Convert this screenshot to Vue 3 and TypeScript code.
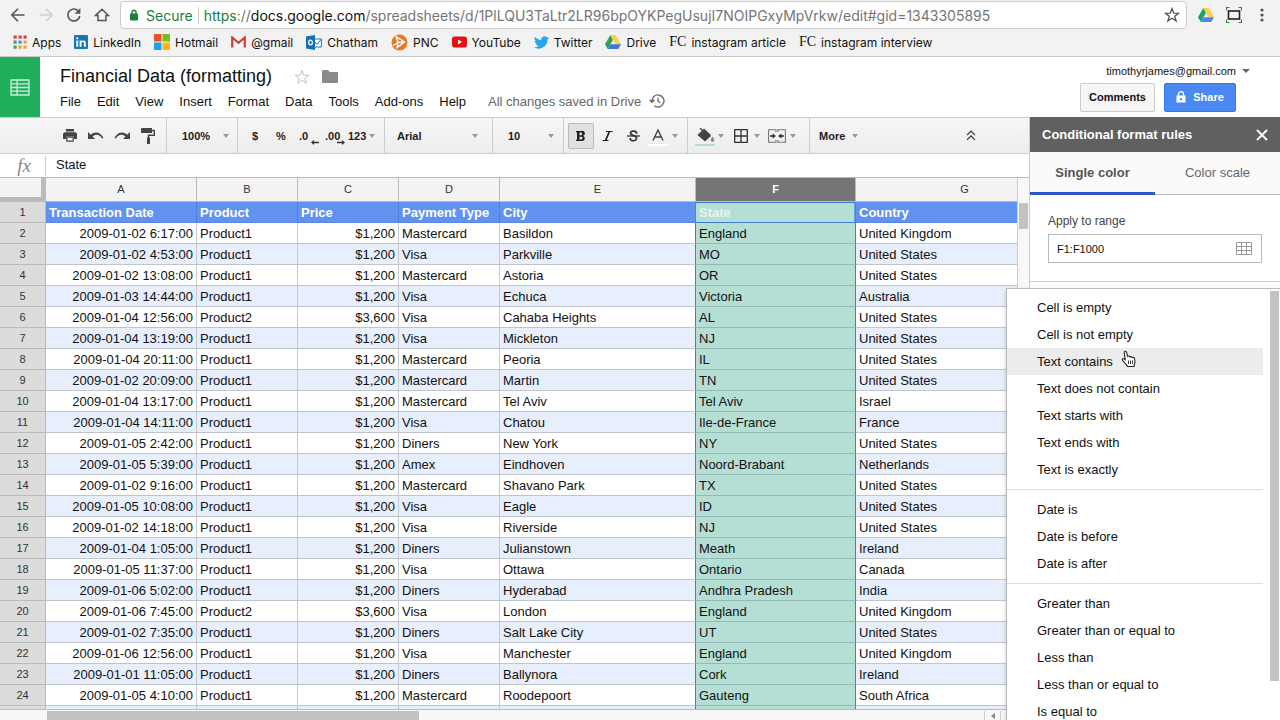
<script setup lang="ts">
import { ref } from 'vue'

interface Bookmark {
  label: string
  icon: string
}

type Row = [string, string, string, string, string, string, string]

const bookmarks: Bookmark[] = [
  { label: 'Apps', icon: 'apps' },
  { label: 'LinkedIn', icon: 'linkedin' },
  { label: 'Hotmail', icon: 'windows' },
  { label: '@gmail', icon: 'gmail' },
  { label: 'Chatham', icon: 'outlook' },
  { label: 'PNC', icon: 'pnc' },
  { label: 'YouTube', icon: 'youtube' },
  { label: 'Twitter', icon: 'twitter' },
  { label: 'Drive', icon: 'drive' },
  { label: 'instagram article', icon: 'fc' },
  { label: 'instagram interview', icon: 'fc' },
]

const appsColors = ['#d8404e', '#d8404e', '#d8404e', '#3aa36a', '#4a8fd8', '#e8a33a', '#3aa36a', '#e8a33a', '#e8a33a']

const menus = ['File', 'Edit', 'View', 'Insert', 'Format', 'Data', 'Tools', 'Add-ons', 'Help']

const columns = ['A', 'B', 'C', 'D', 'E', 'F', 'G']

const headings: Row = ['Transaction Date', 'Product', 'Price', 'Payment Type', 'City', 'State', 'Country']

const rows: Row[] = [
  ['2009-01-02 6:17:00', 'Product1', '$1,200', 'Mastercard', 'Basildon', 'England', 'United Kingdom'],
  ['2009-01-02 4:53:00', 'Product1', '$1,200', 'Visa', 'Parkville', 'MO', 'United States'],
  ['2009-01-02 13:08:00', 'Product1', '$1,200', 'Mastercard', 'Astoria', 'OR', 'United States'],
  ['2009-01-03 14:44:00', 'Product1', '$1,200', 'Visa', 'Echuca', 'Victoria', 'Australia'],
  ['2009-01-04 12:56:00', 'Product2', '$3,600', 'Visa', 'Cahaba Heights', 'AL', 'United States'],
  ['2009-01-04 13:19:00', 'Product1', '$1,200', 'Visa', 'Mickleton', 'NJ', 'United States'],
  ['2009-01-04 20:11:00', 'Product1', '$1,200', 'Mastercard', 'Peoria', 'IL', 'United States'],
  ['2009-01-02 20:09:00', 'Product1', '$1,200', 'Mastercard', 'Martin', 'TN', 'United States'],
  ['2009-01-04 13:17:00', 'Product1', '$1,200', 'Mastercard', 'Tel Aviv', 'Tel Aviv', 'Israel'],
  ['2009-01-04 14:11:00', 'Product1', '$1,200', 'Visa', 'Chatou', 'Ile-de-France', 'France'],
  ['2009-01-05 2:42:00', 'Product1', '$1,200', 'Diners', 'New York', 'NY', 'United States'],
  ['2009-01-05 5:39:00', 'Product1', '$1,200', 'Amex', 'Eindhoven', 'Noord-Brabant', 'Netherlands'],
  ['2009-01-02 9:16:00', 'Product1', '$1,200', 'Mastercard', 'Shavano Park', 'TX', 'United States'],
  ['2009-01-05 10:08:00', 'Product1', '$1,200', 'Visa', 'Eagle', 'ID', 'United States'],
  ['2009-01-02 14:18:00', 'Product1', '$1,200', 'Visa', 'Riverside', 'NJ', 'United States'],
  ['2009-01-04 1:05:00', 'Product1', '$1,200', 'Diners', 'Julianstown', 'Meath', 'Ireland'],
  ['2009-01-05 11:37:00', 'Product1', '$1,200', 'Visa', 'Ottawa', 'Ontario', 'Canada'],
  ['2009-01-06 5:02:00', 'Product1', '$1,200', 'Diners', 'Hyderabad', 'Andhra Pradesh', 'India'],
  ['2009-01-06 7:45:00', 'Product2', '$3,600', 'Visa', 'London', 'England', 'United Kingdom'],
  ['2009-01-02 7:35:00', 'Product1', '$1,200', 'Diners', 'Salt Lake City', 'UT', 'United States'],
  ['2009-01-06 12:56:00', 'Product1', '$1,200', 'Visa', 'Manchester', 'England', 'United Kingdom'],
  ['2009-01-01 11:05:00', 'Product1', '$1,200', 'Diners', 'Ballynora', 'Cork', 'Ireland'],
  ['2009-01-05 4:10:00', 'Product1', '$1,200', 'Mastercard', 'Roodepoort', 'Gauteng', 'South Africa'],
  ['', '', '', '', '', '', ''],
]

const conditionGroups: string[][] = [
  ['Cell is empty', 'Cell is not empty', 'Text contains', 'Text does not contain', 'Text starts with', 'Text ends with', 'Text is exactly'],
  ['Date is', 'Date is before', 'Date is after'],
  ['Greater than', 'Greater than or equal to', 'Less than', 'Less than or equal to', 'Is equal to'],
]

const highlighted = ref('Text contains')
const formula = ref('State')
const range = ref('F1:F1000')
const tab = ref<'single' | 'scale'>('single')
</script>

<template>
  <div class="window">
    <header class="browser">
      <div class="nav-row">
        <nav class="nav-buttons" aria-label="Browser">
          <button aria-label="Back">
            <svg width="16" height="16" viewBox="0 0 16 16" fill="none" stroke="#555" stroke-width="1.6"><path d="M14.5 8H2M8 1.8 1.8 8 8 14.2" /></svg>
          </button>
          <button aria-label="Forward">
            <svg width="16" height="16" viewBox="0 0 16 16" fill="none" stroke="#cfcfcf" stroke-width="1.6"><path d="M1.5 8H14M8 1.8 14.2 8 8 14.2" /></svg>
          </button>
          <button aria-label="Reload">
            <svg width="16" height="16" viewBox="0 0 16 16" fill="none" stroke="#555" stroke-width="1.6"><path d="M13.8 9A6 6 0 1 1 12.2 3.8" /><path d="M14.4 1V6.8H8.6Z" fill="#555" stroke="none" /></svg>
          </button>
          <button aria-label="Home">
            <svg width="16" height="16" viewBox="0 0 16 16" fill="none" stroke="#555" stroke-width="1.5"><path d="M1.6 8.4 8 2.2 14.4 8.4H12V13.6H4V8.4Z" /></svg>
          </button>
        </nav>
        <div class="address">
          <svg width="8" height="12" viewBox="0 0 8 12"><path d="M2 5V3.3a2 2 0 0 1 4 0V5" fill="none" stroke="#188038" stroke-width="1.4" /><rect x="0" y="4.6" width="8" height="6.8" rx="0.8" fill="#188038" /></svg>
          <span class="secure">Secure</span>
          <span class="url"><b>https</b>://<i>docs.google.com</i>/spreadsheets/d/1PlLQU3TaLtr2LR96bpOYKPegUsujI7NOIPGxyMpVrkw/edit#gid=1343305895</span>
          <button class="star" aria-label="Bookmark this page">
            <svg width="16" height="16" viewBox="0 0 16 16" fill="none" stroke="#555" stroke-width="1.3"><path d="M8 1.6 9.7 6.1 14.5 6.3 10.7 9.3 12.1 13.9 8 11.2 3.9 13.9 5.3 9.3 1.5 6.3 6.3 6.1Z" /></svg>
          </button>
        </div>
        <div class="extensions">
          <button aria-label="Google Drive">
            <svg width="16" height="14" viewBox="0 0 16 14"><path d="M5.3 0 0 9.3 2.7 14 8 4.7Z" fill="#11a861" /><path d="M5.3 0h5.4L16 9.3h-5.3Z" fill="#ffcf48" /><path d="M5.4 9.3H16L13.3 14H2.7Z" fill="#4a87ee" /></svg>
          </button>
          <button aria-label="Capture">
            <svg width="16" height="16" viewBox="0 0 16 16" fill="none"><path d="M.5 3.5v-3h3M12.5.5h3v3M15.5 12.5v3h-3M3.5 15.5h-3v-3" stroke="#2d8a2d" stroke-width="1.2" /><rect x="2.5" y="4" width="11" height="8" stroke="#222" stroke-width="1.6" /></svg>
          </button>
          <button aria-label="Menu">
            <svg width="4" height="14" viewBox="0 0 4 14" fill="#555"><circle cx="2" cy="2" r="1.6" /><circle cx="2" cy="7" r="1.6" /><circle cx="2" cy="12" r="1.6" /></svg>
          </button>
        </div>
      </div>

      <nav class="bookmarks" aria-label="Bookmarks">
        <a v-for="mark in bookmarks" :key="mark.label" href="#">
          <svg v-if="mark.icon === 'apps'" width="14" height="14" viewBox="0 0 14 14">
            <rect v-for="(color, n) in appsColors" :key="n" :x="(n % 3) * 5 + 0.5" :y="Math.floor(n / 3) * 5 + 0.5" width="3.2" height="3.2" :fill="color" />
          </svg>
          <svg v-else-if="mark.icon === 'linkedin'" width="14" height="14" viewBox="0 0 14 14">
            <rect width="14" height="14" rx="1" fill="#1279b5" /><path d="M2.3 5.5h1.9v6.2H2.3ZM5.6 5.5h1.8v.9c.9-1.5 4.4-1.5 4.4 1.6v3.7H9.9V8.5c0-2-2.4-1.8-2.4 0v3.2H5.6Z" fill="#fff" /><circle cx="3.25" cy="3.3" r="1.15" fill="#fff" />
          </svg>
          <svg v-else-if="mark.icon === 'windows'" width="16" height="16" viewBox="0 0 16 16">
            <path d="M0 0h7.5v7.5H0Z" fill="#e8502a" /><path d="M8.5 0H16v7.5H8.5Z" fill="#7dbb1c" /><path d="M0 8.5h7.5V16H0Z" fill="#1aa2ec" /><path d="M8.5 8.5H16V16H8.5Z" fill="#fdb813" />
          </svg>
          <svg v-else-if="mark.icon === 'gmail'" width="15" height="12" viewBox="0 0 15 12">
            <path d="M1 .8h13v10.5H1Z" fill="#f8f6f6" /><path d="M1.2 11.5V1.5L7.5 6.8 13.8 1.5V11.5" fill="none" stroke="#d63c37" stroke-width="2.2" />
          </svg>
          <svg v-else-if="mark.icon === 'outlook'" width="16" height="15" viewBox="0 0 16 15">
            <path d="M8 4h7.4v8H8Z" fill="#fff" stroke="#1a75bc" /><path d="m9 7 2 2.5L15 4.5" fill="none" stroke="#1a75bc" /><path d="M0 1.5 9 0v15L0 13.5Z" fill="#1070ba" /><ellipse cx="4.5" cy="7.5" rx="1.9" ry="2.4" fill="none" stroke="#fff" stroke-width="1.3" />
          </svg>
          <svg v-else-if="mark.icon === 'pnc'" width="17" height="17" viewBox="0 0 17 17">
            <circle cx="8.5" cy="8.5" r="8" fill="#e57b27" /><path d="M5 2.5 13.5 8 6 13.5 7 8.5ZM7 8.5 13.5 8M7 8.5 2 11.5" fill="none" stroke="#fff" stroke-width="1.4" />
          </svg>
          <svg v-else-if="mark.icon === 'youtube'" width="15" height="12" viewBox="0 0 15 12">
            <rect y=".5" width="15" height="11" rx="2.8" fill="#e60f12" /><path d="M6 3.6 10 6 6 8.4Z" fill="#fff" />
          </svg>
          <svg v-else-if="mark.icon === 'twitter'" width="15" height="13" viewBox="0 0 24 20">
            <path d="M24 2.4a10 10 0 0 1-2.8.8A5 5 0 0 0 23.3.5a10 10 0 0 1-3.1 1.2A4.9 4.9 0 0 0 11.8 6.2 14 14 0 0 1 1.7 1 4.9 4.9 0 0 0 3.2 7.6a4.9 4.9 0 0 1-2.2-.6 4.9 4.9 0 0 0 3.9 4.9 5 5 0 0 1-2.2.1 4.9 4.9 0 0 0 4.6 3.4A9.9 9.9 0 0 1 0 17.5 14 14 0 0 0 21.5 5 10 10 0 0 0 24 2.4Z" fill="#2aa5ec" />
          </svg>
          <svg v-else-if="mark.icon === 'drive'" width="16" height="14" viewBox="0 0 16 14">
            <path d="M5.3 0 0 9.3 2.7 14 8 4.7Z" fill="#2ea35a" /><path d="M5.3 0h5.4L16 9.3h-5.3Z" fill="#fbd14b" /><path d="M5.4 9.3H16L13.3 14H2.7Z" fill="#4374de" />
          </svg>
          <span v-else class="fc">FC</span>
          <span>{{ mark.label }}</span>
        </a>
      </nav>
    </header>

    <section class="doc-header">
      <a class="home" href="#" aria-label="Sheets home">
        <svg width="20" height="17" viewBox="0 0 20 17" fill="none" stroke="#c9f0d8" stroke-width="1.3"><path d="M1 1h18v15H1ZM1 4.8h18M1 8.5h18M1 12.2h18M7 1v15" /></svg>
      </a>
      <div class="doc-info">
        <div class="title-row">
          <h1>Financial Data (formatting)</h1>
          <button aria-label="Star">
            <svg width="16" height="16" viewBox="0 0 16 16" fill="none" stroke="#c4c4c4"><path d="M8 1.3 9.7 6.1 15 6.2 10.8 9.3 12.3 14.3 8 11.3 3.7 14.3 5.2 9.3 1 6.2 6.3 6.1Z" /></svg>
          </button>
          <button aria-label="Move to folder">
            <svg width="16" height="14" viewBox="0 0 16 14"><path d="M1 0h5l1.6 2H15a1 1 0 0 1 1 1v9a1 1 0 0 1-1 1H1a1 1 0 0 1-1-1V1A1 1 0 0 1 1 0Z" fill="#8a8a8a" /></svg>
          </button>
        </div>
        <nav class="menu-row" aria-label="Menu bar">
          <button v-for="menu in menus" :key="menu">{{ menu }}</button>
          <span class="saved">All changes saved in Drive</span>
          <svg width="16" height="14" viewBox="0 0 16 14" fill="none" stroke="#666" stroke-width="1.3"><path d="M3 7.5A6 6 0 1 1 5.3 11.7M.8 5.8 3 8.3 5.4 5.8M9 3.8V7.2L11.3 8.8" /></svg>
        </nav>
      </div>
      <div class="account">
        <button class="email">timothyrjames@gmail.com <span class="caret" /></button>
        <div class="actions">
          <button class="comments">Comments</button>
          <button class="share">
            <svg width="10" height="12" viewBox="0 0 10 12"><path d="M2.5 5V3.2a2.5 2.5 0 0 1 5 0V5" fill="none" stroke="#fff" stroke-width="1.3" /><path d="M.5 4.6h9v7h-9ZM5 7a1.2 1.2 0 1 0 .01 0Z" fill="#fff" fill-rule="evenodd" /></svg>
            Share
          </button>
        </div>
      </div>
    </section>

    <div class="workspace">
      <main>
        <div class="toolbar" role="toolbar" aria-label="Formatting">
          <div class="group g-file">
            <button aria-label="Print"><svg width="14" height="13" viewBox="0 0 14 13" fill="#444"><path d="M3 0h8v2.6H3ZM2 3.3h10a2 2 0 0 1 2 2V10h-3V7.5H3V10H0V5.3a2 2 0 0 1 2-2Z" /><path d="M3.8 8.2h6.4v4H3.8Z" fill="#f5f5f5" stroke="#444" stroke-width="1.2" /></svg></button>
            <button aria-label="Undo"><svg width="16" height="9" viewBox="0 0 16 9"><path d="M0 1v7h7L4.5 5.5C8 2.7 11.8 3.5 14 7.5L15.5 7C13 1.5 7.5-.3 2.8 3.7Z" fill="#444" /></svg></button>
            <button aria-label="Redo"><svg width="16" height="9" viewBox="0 0 16 9"><path d="M16 1v7H9l2.5-2.5C8 2.7 4.2 3.5 2 7.5L.5 7C3 1.5 8.5-.3 13.2 3.7Z" fill="#444" /></svg></button>
            <button aria-label="Paint format"><svg width="14" height="16" viewBox="0 0 14 16"><path d="M1 0h10v5H1A1 1 0 0 1 0 4V1A1 1 0 0 1 1 0Z" fill="#444" /><path d="M11 2.5h2.3v4.8H7.5V10" fill="none" stroke="#444" stroke-width="1.4" /><path d="M6 9.5h3V16H6Z" fill="#444" /></svg></button>
          </div>
          <div class="group g-zoom"><button class="drop">100% <span class="caret" /></button></div>
          <div class="group g-number">
            <button aria-label="Currency">$</button>
            <button aria-label="Percent">%</button>
            <button class="decimals" aria-label="Decrease decimals">.0<svg width="8" height="5" viewBox="0 0 8 5"><path d="M0 2.5 3 0v1.7h5v1.6H3V5Z" fill="#333" /></svg></button>
            <button class="decimals" aria-label="Increase decimals">.00<svg width="8" height="5" viewBox="0 0 8 5"><path d="M8 2.5 5 0v1.7H0v1.6h5V5Z" fill="#333" /></svg></button>
            <button class="formats">123 <span class="caret" /></button>
          </div>
          <div class="group g-font"><button class="drop">Arial <span class="caret" /></button></div>
          <div class="group g-size"><button class="drop">10 <span class="caret" /></button></div>
          <div class="group g-text">
            <button class="pressed" aria-label="Bold"><svg width="10" height="12" viewBox="0 0 10 12"><path d="M0 1h5.5a2.5 2.5 0 0 1 1.6 4.8 2.7 2.7 0 0 1-1.2 5.2H0V9.7h1V2.3H0ZM3.5 2.5v2.8h1.3a1.4 1.4 0 0 0 0-2.8ZM3.5 6.7v2.8h1.6a1.4 1.4 0 0 0 0-2.8Z" fill="#222" fill-rule="evenodd" /></svg></button>
            <button aria-label="Italic"><svg width="11" height="12" viewBox="0 0 11 12" fill="none" stroke="#222"><path d="M4 1.5h6.5M.5 10.5h6" stroke-width="1.2" /><path d="M7.5 1.5 3.5 10.5" stroke-width="1.8" /></svg></button>
            <button aria-label="Strikethrough"><svg width="13" height="12" viewBox="0 0 13 12" fill="none" stroke="#333" stroke-width="1.7"><path d="M9.5 3.8V2.3C8 .7 3.8.7 3.5 3c0 1.5 1.5 2 3 2.5s3.5 1.5 3 3.3C8.8 11.3 5 11.3 3.3 9.5V8" /><path d="M0 6h13" stroke-width="1.3" /></svg></button>
            <button class="swatch" aria-label="Text color"><span class="glyph"><svg width="12" height="12" viewBox="0 0 12 12" fill="none" stroke="#444" stroke-width="1.4"><path d="M1 11.5 6 1 11 11.5M3 8h6" /></svg></span><span class="caret" /></button>
          </div>
          <div class="group g-cell">
            <button aria-label="Fill color"><span class="glyph mint"><svg width="20" height="14" viewBox="0 0 20 14"><path d="M3 7.5 9.5 2 16 8 10 13.5Z" fill="#444" /><path d="M5 0 9.5 4.5M3 7.5 9 1.5 15.5 7.5" fill="none" stroke="#444" stroke-width="1.4" /><path d="M17.5 8.5c1.3 2 1.8 2.8 1.8 3.6a1.8 1.8 0 0 1-3.6 0c0-.8.5-1.6 1.8-3.6Z" fill="#888" /></svg></span><span class="caret" /></button>
            <button aria-label="Borders"><span class="glyph"><svg width="14" height="14" viewBox="0 0 14 14" fill="none" stroke="#333" stroke-width="1.3"><path d="M.7.7h12.6v12.6H.7ZM7 .7v12.6M.7 7h12.6" /></svg></span><span class="caret" /></button>
            <button aria-label="Merge cells"><span class="glyph"><svg width="18" height="14" viewBox="0 0 18 14" fill="none" stroke="#777"><path d="M8 3V.7H.6v12.6H8V11M10 3V.7h7.4v12.6H10V11" stroke-width="1.1" /><path d="M2 7h3M16 7h-3" stroke="#333" stroke-width="1.4" /><path d="M4.5 4.5 8 7 4.5 9.5ZM13.5 4.5 10 7l3.5 2.5Z" fill="#333" stroke="none" /></svg></span><span class="caret" /></button>
          </div>
          <button class="more">More <span class="caret" /></button>
          <button class="collapse" aria-label="Hide menus"><svg width="10" height="11" viewBox="0 0 10 11" fill="none" stroke="#333" stroke-width="1.2"><path d="M1 5.2 5 1.2 9 5.2M1 9.8 5 5.8 9 9.8" /></svg></button>
        </div>

        <div class="formula-bar">
          <label for="formula">fx</label>
          <input id="formula" v-model="formula" type="text" />
        </div>

        <div class="sheet">
          <div class="cells">
            <table>
              <colgroup>
                <col class="w-num" /><col class="w-a" /><col class="w-b" /><col class="w-c" /><col class="w-d" /><col class="w-e" /><col class="w-f" /><col class="w-g" />
              </colgroup>
              <thead>
                <tr>
                  <th class="corner" scope="col" aria-label="Select all"></th>
                  <th v-for="column in columns" :key="column" scope="col" :class="{ selected: column === 'F' }">{{ column }}</th>
                </tr>
              </thead>
              <tbody>
                <tr class="headings">
                  <th scope="row">1</th>
                  <td v-for="(heading, n) in headings" :key="n" :class="`c-${columns[n]}`">{{ heading }}</td>
                </tr>
                <tr v-for="(row, r) in rows" :key="r" :class="{ band: r % 2 === 1 }">
                  <th scope="row">{{ row[0] ? r + 2 : '' }}</th>
                  <td v-for="(value, n) in row" :key="n" :class="`c-${columns[n]}`">{{ value }}</td>
                </tr>
              </tbody>
            </table>
          </div>
          <div class="v-scroll"><div class="thumb" /></div>
        </div>
        <div class="h-scroll"><div class="thumb" /><div class="arrow"><svg width="4" height="6" viewBox="0 0 4 6"><path d="M4 0v6L0 3Z" fill="#888" /></svg></div></div>
      </main>

      <aside>
        <div class="panel-title">
          <h2>Conditional format rules</h2>
          <button aria-label="Close"><svg width="12" height="12" viewBox="0 0 12 12" stroke="#fff" stroke-width="1.9"><path d="M1 1 11 11M11 1 1 11" /></svg></button>
        </div>
        <div class="tabs" role="tablist">
          <button role="tab" :aria-selected="tab === 'single'" :class="{ active: tab === 'single' }" @click="tab = 'single'">Single color</button>
          <button role="tab" :aria-selected="tab === 'scale'" :class="{ active: tab === 'scale' }" @click="tab = 'scale'">Color scale</button>
        </div>
        <div class="range">
          <label for="range">Apply to range</label>
          <div class="range-box">
            <input id="range" v-model="range" type="text" />
            <button aria-label="Select data range"><svg width="16" height="13" viewBox="0 0 16 13" fill="none" stroke="#999"><path d="M.5.5h15v12H.5ZM.5 4.5h15M.5 8.5h15M5.5.5v12M10.500.5v12" /></svg></button>
          </div>
        </div>
        <div class="conditions" role="menu">
          <div class="options">
            <ul v-for="(group, g) in conditionGroups" :key="g">
              <li v-for="option in group" :key="option">
                <button role="menuitem" :class="{ hover: option === highlighted }" @mouseenter="highlighted = option">{{ option }}</button>
              </li>
            </ul>
          </div>
          <div class="thumb" />
          <svg class="pointer" width="16" height="18" viewBox="0 0 16 18"><path d="M4.2 9.6 3.2 2.8C3 1 5 .7 5.5 2.3L6.8 6.5C7.5 5.7 8.8 6 9 7c.8-.7 2-.3 2.2.6.9-.6 2.1-.1 2.3.9l.5 3c.1 1.8-.8 2.500-1 5H6.5C5.8 14.5 3 12.5 1.5 10.3.7 9 2.3 8 3.3 9Z" fill="#fff" stroke="#222" stroke-width="1.1" /><path d="M7.5 10.5v3.5M9.5 10.5v3.5M11.5 10.5v3.5" stroke="#222" stroke-width=".9" /></svg>
        </div>
      </aside>
    </div>
  </div>
</template>

<style>
body {
  margin: 0;
}
</style>

<style scoped>
* {
  box-sizing: border-box;
}

button,
input {
  margin: 0;
  padding: 0;
  border: 0;
  background: none;
  font: inherit;
  color: inherit;
}

svg {
  display: block;
  flex: none;
}

h1,
h2,
ul {
  margin: 0;
  padding: 0;
  font-weight: normal;
  list-style: none;
}

.window {
  display: flex;
  flex-direction: column;
  height: 100vh;
  overflow: hidden;
  background: #fff;
  color: #111;
  font: 13px "Liberation Sans", Arial, sans-serif;
  white-space: nowrap;
}

/* Browser chrome */
.browser {
  flex: none;
  background: #f2f2f2;
  border-bottom: 1px solid #c8c8c8;
  font-family: Inter, "Noto Sans", sans-serif;
}

.nav-row {
  display: flex;
  align-items: center;
  height: 30px;
}

.nav-buttons {
  display: flex;
  gap: 12px;
  width: 120px;
  padding-left: 10px;
}

.address {
  display: flex;
  flex: 1;
  align-items: center;
  min-width: 0;
  height: 28px;
  padding: 0 6px 0 9px;
  border: 1px solid #ccc;
  border-radius: 4px;
  background: #fff;
  font-size: 14px;
}

.secure {
  margin: 0 5px 0 8px;
  color: #188038;
}

.url {
  flex: 1;
  padding-left: 5px;
  border-left: 1px solid #ccc;
  color: #757575;
  overflow: hidden;
}

.url b {
  font-weight: normal;
  color: #188038;
}

.url i {
  font-style: normal;
  color: #111;
}

.extensions {
  display: flex;
  align-items: center;
  gap: 12px;
  width: 93px;
  padding-left: 11px;
}

.extensions button:last-child {
  margin-left: 6px;
}

.bookmarks {
  display: flex;
  align-items: center;
  gap: 13px;
  height: 26px;
  padding: 0 0 2px 13px;
  font-size: 12px;
}

.bookmarks a {
  display: flex;
  align-items: center;
  gap: 5px;
  color: #111;
  text-decoration: none;
}

.fc {
  font: 14px/16px "Liberation Serif", serif;
}

/* Document header */
.doc-header {
  display: flex;
  flex: none;
  height: 60px;
}

.home {
  display: flex;
  align-items: center;
  justify-content: center;
  width: 40px;
  background: #1fae5b;
}

.doc-info {
  flex: 1;
  padding: 8px 0 0 20px;
}

.title-row {
  display: flex;
  align-items: center;
  height: 23px;
}

.title-row h1 {
  margin-right: 22px;
  font-size: 18px;
}

.title-row button {
  margin-right: 12px;
}

.menu-row {
  display: flex;
  align-items: center;
  gap: 16px;
  height: 26px;
}

.saved {
  margin-left: 6px;
  color: #666;
}

.menu-row svg {
  margin-left: -8px;
}

.account {
  display: flex;
  flex-direction: column;
  align-items: flex-end;
  gap: 4px;
  padding-top: 6px;
  font-size: 11px;
}

.email {
  display: flex;
  align-items: center;
  gap: 6px;
  height: 16px;
  padding-right: 30px;
}

.actions {
  display: flex;
  gap: 9px;
  padding-right: 44px;
}

.actions button {
  display: flex;
  align-items: center;
  justify-content: center;
  width: 75px;
  height: 29px;
  padding-bottom: 2px;
  border: 1px solid #ccc;
  border-radius: 2px;
  background: #f6f6f6;
  font-weight: bold;
}

.actions .share {
  gap: 7px;
  width: 72px;
  border-color: #3079ed;
  background: #4a88f2;
  color: #fff;
}

.caret {
  display: block;
  flex: none;
  border: 3px solid transparent;
  border-top: 4px solid #999;
  border-bottom: 0;
}

.email .caret {
  border-width: 4px 4px 0;
  border-top-color: #666;
}

/* Workspace */
.workspace {
  display: flex;
  flex: 1;
  min-height: 0;
}

main {
  display: flex;
  flex: 1;
  flex-direction: column;
  min-width: 0;
  border-right: 1px solid #ccc;
}

.toolbar {
  display: flex;
  flex: none;
  align-items: center;
  height: 37px;
  border-top: 1px solid #ccc;
  border-bottom: 1px solid #ccc;
  background: linear-gradient(#f7f7f7, #ececec);
  color: #222;
  font-size: 11px;
  font-weight: bold;
}

.group {
  display: flex;
  align-items: center;
  height: 100%;
  border-right: 1px solid #ccc;
}

.group button {
  display: flex;
  align-items: center;
  justify-content: center;
  height: 26px;
}

.g-file {
  width: 167px;
  padding-left: 57px;
}

.g-file button,
.g-number button,
.g-text button {
  width: 26px;
}

.group .drop {
  flex: 1;
  justify-content: space-between;
}

.g-zoom {
  width: 71px;
  padding: 0 8px 0 15px;
}

.g-number {
  width: 147px;
  padding-left: 4px;
}

.group .decimals {
  position: relative;
  justify-content: flex-start;
  padding-left: 5px;
}

.decimals svg {
  position: absolute;
  right: 1px;
  bottom: 4px;
}

.group .formats {
  justify-content: flex-start;
  gap: 3px;
  width: 32px;
  padding-left: 2px;
}

.g-font {
  width: 108px;
  padding: 0 14px 0 12px;
}

.g-size {
  width: 71px;
  padding: 0 9px 0 15px;
}

.g-text {
  width: 124px;
  padding-left: 4px;
}

.g-text .pressed {
  border: 1px solid #bbb;
  border-radius: 2px;
  background: #e0e0e0;
}

.group .swatch {
  justify-content: flex-start;
  gap: 4px;
  width: 36px;
  padding-left: 2px;
}

.glyph {
  display: flex;
  align-items: center;
  justify-content: center;
  width: 20px;
  height: 20px;
}

.swatch .glyph,
.mint {
  border-bottom: 2px solid #fff;
}

.glyph.mint {
  border-bottom-color: #b7e1cd;
}

.g-cell {
  gap: 7px;
  width: 122px;
  padding-left: 7px;
}

.g-cell button {
  gap: 3px;
}

.more {
  display: flex;
  align-items: center;
  gap: 7px;
  padding-left: 9px;
}

.collapse {
  margin: 0 53px 0 auto;
}

.formula-bar {
  display: flex;
  flex: none;
  align-items: center;
  height: 23px;
}

.formula-bar label {
  width: 46px;
  padding-right: 14px;
  border-right: 1px solid #ccc;
  color: #888;
  font: italic 19px/20px "Liberation Serif", serif;
  text-align: right;
}

.formula-bar input {
  flex: 1;
  padding: 0 0 2px 10px;
}

.sheet {
  display: flex;
  flex: 1;
  min-height: 0;
  border-top: 1px solid #bbb;
  border-bottom: 1px solid #bbb;
}

.cells {
  flex: 1;
  min-width: 0;
  overflow: hidden;
}

table {
  width: 1074px;
  table-layout: fixed;
  border-collapse: separate;
  border-spacing: 0;
}

.w-num { width: 46px; }
.w-a { width: 151px; }
.w-b,
.w-c,
.w-d { width: 101px; }
.w-e { width: 196px; }
.w-f { width: 160px; }
.w-g { width: 218px; }

th,
td {
  height: 21px;
  padding: 2px 3px 0;
  border-right: 1px solid #c4c8d0;
  border-bottom: 1px solid #c0c4cc;
  line-height: 18px;
  text-align: left;
  overflow: hidden;
}

th {
  padding: 0;
  border-color: #bbb;
  background: #dcdcdc;
  color: #333;
  font-size: 11px;
  font-weight: normal;
  text-align: center;
}

thead th {
  height: 24px;
  padding-bottom: 2px;
  background: #f3f3f3;
}

thead .corner {
  padding: 0;
  border-right: 5px solid #bbb;
  border-bottom: 5px solid #bbb;
}

thead .selected {
  background: #757575;
  color: #fff;
  font-weight: bold;
}

.band td {
  background: #e7eefc;
}

.c-A,
.c-C {
  text-align: right;
}

td.c-E,
td.c-F {
  border-right-color: #3c7fd0;
}

tbody tr td.c-F {
  border-bottom-color: #93b9b9;
  background: #b5ded5;
}

.headings td {
  padding-top: 1px;
  border-right-color: #5580d5;
  border-bottom-color: #5b88dd;
  background: #6192f2;
  color: #fff;
  font-weight: bold;
  text-align: left;
}

tbody .headings td.c-F {
  border-bottom-color: #3c7fd0;
  background: #b5ded5;
  box-shadow: inset 0 1px #3c7fd0, inset -1px 0 #6da3d8;
  color: #e6f3f5;
}

.v-scroll {
  flex: none;
  width: 12px;
  padding: 25px 1px 0;
  border-left: 1px solid #ccc;
  background: #f8f8f8;
}

.thumb {
  background: #c2c2c2;
}

.v-scroll .thumb {
  height: 26px;
}

.h-scroll {
  display: flex;
  flex: none;
  justify-content: space-between;
  height: 10px;
  padding: 1px 28px 0 47px;
  background: #f8f8f8;
}

.h-scroll .thumb {
  flex: 0 0 39%;
}

.arrow {
  display: flex;
  align-items: center;
  justify-content: center;
  width: 17px;
  border: 1px solid #ccc;
  border-width: 0 1px;
}

/* Side panel */
aside {
  position: relative;
  flex: none;
  width: 250px;
}

.panel-title {
  display: flex;
  align-items: center;
  justify-content: space-between;
  height: 35px;
  padding: 0 12px;
  background: #606060;
  color: #fff;
}

.panel-title h2 {
  font-size: 13px;
  font-weight: bold;
}

.tabs {
  display: flex;
  height: 43px;
  border-bottom: 1px solid #bbb;
  background: #fafafa;
}

.tabs button {
  flex: 1;
  height: 43px;
  border-bottom: 3px solid transparent;
  color: #666;
}

.tabs .active {
  border-bottom-color: #2a56c6;
  color: #555;
  font-weight: bold;
}

.range {
  height: 87px;
  padding: 19px 18px 0;
  border-bottom: 1px solid #ccc;
}

.range label {
  display: block;
  height: 20px;
  color: #444;
  font-size: 12px;
  line-height: 14px;
}

.range-box {
  display: flex;
  align-items: center;
  height: 29px;
  padding: 0 9px 0 8px;
  border: 1px solid #bbb;
}

.range-box input {
  flex: 1;
  min-width: 0;
  font-size: 11px;
}

.conditions {
  position: absolute;
  top: 171px;
  right: 0;
  bottom: 0;
  left: -24px;
  display: flex;
  justify-content: space-between;
  padding-right: 1px;
  border-top: 1px solid #bbb;
  border-left: 1px solid #bbb;
  background: #fff;
  box-shadow: 0 2px 4px rgba(0, 0, 0, 0.2);
  overflow: hidden;
}

.options {
  width: 256px;
}

.options ul {
  padding: 6px 0;
}

.options ul:first-child {
  padding-top: 5px;
}

.options ul + ul {
  border-top: 1px solid #ddd;
}

.options button {
  display: block;
  width: 100%;
  height: 27px;
  padding-left: 30px;
  text-align: left;
}

.options .hover {
  background: #ececec;
}

.conditions .thumb {
  width: 9px;
  height: 390px;
  margin-top: 2px;
}

.pointer {
  position: absolute;
  top: 61px;
  left: 114px;
}
</style>
